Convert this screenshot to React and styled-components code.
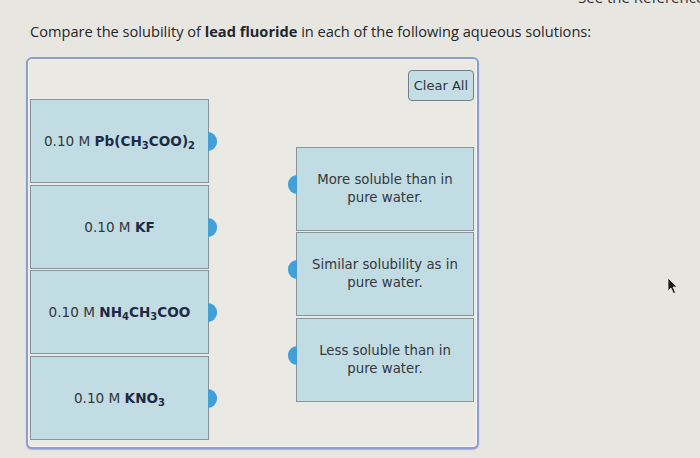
import styled, { createGlobalStyle } from "styled-components";

const GlobalStyle = createGlobalStyle`
    html, body {
        margin: 0;
        background: #e8e6e1;
    }
    body {
        font-family: "DejaVu Sans", Verdana, sans-serif;
        color: #2b2f33;
    }
`;

const Page = styled.div`
    position: relative;
    width: 700px;
    height: 458px;
    overflow: hidden;
`;

const TopStrip = styled.div`
    height: 5px;
    overflow: hidden;
    white-space: nowrap;
    padding-left: 578px;
    font-family: "Open Sans", sans-serif;
    font-size: 15px;
    color: #333;
    span {
        display: block;
        margin-top: -13px;
    }
`;

const Question = styled.p`
    margin: 14px 0 0 30px;
    font-family: "Open Sans", sans-serif;
    font-size: 14.6px;
    line-height: 24px;
    color: #23262a;
    b {
        font-weight: 700;
    }
`;

const Panel = styled.div`
    box-sizing: border-box;
    margin: 14px 0 0 26px;
    width: 453px;
    height: 392px;
    padding: 0 3px 0 2px;
    border: 2px solid #8d9dd4;
    border-radius: 6px;
    box-shadow: inset 0 0 0 1px #f6f5f2, 0 1px 1px rgba(80, 90, 120, 0.35);
    background: #ebe9e4;
    display: grid;
    grid-template-columns: 179px 178px;
    column-gap: 87px;
`;

const Column = styled.div`
    display: flex;
    flex-direction: column;
    gap: 1.5px;
    padding-top: ${(p) => p.$top || 0}px;
`;

const ClearButton = styled.button`
    align-self: flex-end;
    margin: 11px 0 44px;
    height: 31px;
    padding: 0 5px;
    border: 1px solid #6f8088;
    border-radius: 4px;
    background: #c5dee5;
    font-family: "DejaVu Sans", Verdana, sans-serif;
    font-size: 13px;
    color: #2f3438;
`;

const Card = styled.div`
    position: relative;
    box-sizing: border-box;
    height: 84px;
    border: 1px solid #87959b;
    background: #c2dce3;
    display: flex;
    align-items: center;
    justify-content: center;
    text-align: center;
    padding: 0 8px;
    font-size: ${(p) => p.$size || 13}px;
    line-height: 18px;
    color: #33383c;
    b {
        color: #1e2a45;
        font-weight: 700;
    }
    sub {
        font-size: 10px;
        line-height: 0;
        vertical-align: -3px;
    }
`;

const Dot = styled.span`
    position: absolute;
    top: ${(p) => (p.$side === "left" ? "27px" : "32px")};
    ${(p) => (p.$side === "left" ? "left: -9px;" : "right: -9px;")}
    width: 9px;
    height: 19px;
    background: #42a0d6;
    border-radius: ${(p) =>
        p.$side === "left" ? "10px 0 0 10px" : "0 10px 10px 0"};
`;

const Pointer = styled.svg`
    position: absolute;
    left: 667px;
    top: 277px;
`;

const solutions = [
    <>
        0.10 M{" "}
        <b>
            Pb(CH<sub>3</sub>COO)<sub>2</sub>
        </b>
    </>,
    <>
        0.10 M <b>KF</b>
    </>,
    <>
        0.10 M{" "}
        <b>
            NH<sub>4</sub>CH<sub>3</sub>COO
        </b>
    </>,
    <>
        0.10 M{" "}
        <b>
            KNO<sub>3</sub>
        </b>
    </>,
];

const targets = [
    ["More soluble than in", "pure water."],
    ["Similar solubility as in", "pure water."],
    ["Less soluble than in", "pure water."],
];

export default function App() {
    return (
        <Page>
            <GlobalStyle />
            <TopStrip>
                <span>See the References to access important values if needed</span>
            </TopStrip>
            <Question>
                Compare the solubility of <b>lead fluoride</b> in each of the
                following aqueous solutions:
            </Question>
            <Panel>
                <Column $top={40}>
                    {solutions.map((s, i) => (
                        <Card key={i} $size={13.6}>
                            <span>{s}</span>
                            <Dot $side="right" />
                        </Card>
                    ))}
                </Column>
                <Column>
                    <ClearButton>Clear All</ClearButton>
                    {targets.map(([a, b], i) => (
                        <Card key={i} $size={13.3}>
                            <span>
                                {a}
                                <br />
                                {b}
                            </span>
                            <Dot $side="left" />
                        </Card>
                    ))}
                </Column>
            </Panel>
            <Pointer width="12" height="18" viewBox="0 0 12 18">
                <path
                    d="M1 1 L1 14 L4 11 L6.5 16.5 L8.5 15.5 L6 10 L10 10 Z"
                    fill="#1a1a1a"
                    stroke="#e8e6e1"
                    strokeWidth="0.8"
                />
            </Pointer>
        </Page>
    );
}
